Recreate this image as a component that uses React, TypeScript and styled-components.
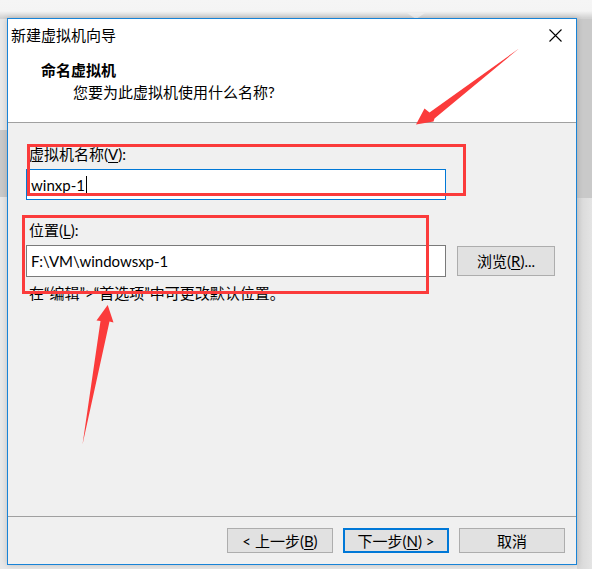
import React from "react";
import styled, { createGlobalStyle } from "styled-components";

const Global = createGlobalStyle`
  html, body { margin: 0; padding: 0; background: #e6e6e6; }
  * { box-sizing: border-box; }
`;

const FONT = `"Lato", "Noto Sans CJK SC", sans-serif`;

const Page = styled.div`
  position: relative;
  width: 592px;
  height: 569px;
  overflow: hidden;
  padding: 18px 15px 4px 7px;
  font-family: ${FONT};
  color: #000;
  background:
    linear-gradient(to bottom, #f5f5f5 0px, #f4f4f4 11px, #d2d2d2 18px, #d2d2d2 19px) top left / 100% 19px no-repeat,
    linear-gradient(#c9c9c9, #c9c9c9) right 0 top 18px / 15px 180px no-repeat,
    linear-gradient(#c9c9c9, #c9c9c9) left 0 top 130px / 7px 67px no-repeat,
    linear-gradient(to right, #d6d6d6, #e4e4e4) right 0 top 198px / 15px 371px no-repeat,
    #e8e8e8;
`;

const Notch = styled.div`
  position: absolute;
  left: 407px;
  top: 13px;
  width: 0;
  height: 0;
  border-left: 9px solid transparent;
  border-right: 9px solid transparent;
  border-top: 6px solid #f0f0f0;
`;

const Window = styled.div`
  position: relative;
  width: 570px;
  height: 547px;
  display: flex;
  flex-direction: column;
  border: 1px solid #1883d7;
  background: #f0f0f0;
  box-shadow: 0 0 6px rgba(0, 0, 0, 0.18);
`;

const TitleBar = styled.div`
  height: 32px;
  flex: none;
  display: flex;
  align-items: center;
  justify-content: space-between;
  padding-left: 3px;
  background: #fff;
`;

const TitleText = styled.span`
  font-size: 15px;
  line-height: 20px;
`;

const CloseBox = styled.div`
  width: 42px;
  height: 32px;
  display: flex;
  align-items: center;
  justify-content: center;
`;

const Header = styled.div`
  height: 72px;
  flex: none;
  background: #fff;
  border-bottom: 1px solid #a0a0a0;
  padding: 9px 0 0 33px;
`;

const Heading = styled.div`
  font-size: 15px;
  line-height: 20px;
  font-weight: 700;
`;

const SubHeading = styled.div`
  margin: 2px 0 0 32px;
  font-size: 15px;
  line-height: 20px;
`;

const Body = styled.div`
  flex: 1;
  padding: 21px 0 0 18px;
  display: flex;
  flex-direction: column;
  align-items: flex-start;
`;

const Label = styled.div<{ $gap: number }>`
  margin: ${(p) => p.$gap}px 0 0 3px;
  font-size: 15px;
  line-height: 20px;
`;

const U = styled.span`
  text-decoration: underline;
  text-underline-offset: 2px;
`;

const Row = styled.div`
  margin-top: 5px;
  display: flex;
  align-items: center;
  gap: 11px;
`;

const Field = styled.div<{ $focused?: boolean; $h: number }>`
  width: 420px;
  height: ${(p) => p.$h}px;
  margin-top: ${(p) => (p.$focused ? 5 : 0)}px;
  display: flex;
  align-items: center;
  padding-left: 4px;
  background: #fff;
  border: 1px solid ${(p) => (p.$focused ? "#0078d7" : "#7a7a7a")};
  font-size: 15px;
  line-height: 20px;
`;

const Caret = styled.span`
  display: inline-block;
  width: 1px;
  height: 18px;
  margin-left: 1px;
  background: #000;
`;

const Button = styled.div<{ $w: number; $h: number; $default?: boolean }>`
  width: ${(p) => p.$w}px;
  height: ${(p) => p.$h}px;
  display: flex;
  align-items: center;
  justify-content: center;
  background: #e1e1e1;
  border: ${(p) => (p.$default ? "2px solid #0078d7" : "1px solid #adadad")};
  font-size: 15px;
  line-height: 20px;
  white-space: pre;
`;

const Hint = styled.div`
  margin: 6px 0 0 3px;
  font-size: 15px;
  line-height: 20px;
`;

const Footer = styled.div`
  flex: none;
  border-top: 1px solid #a0a0a0;
  padding: 11px 11px 11px 0;
  display: flex;
  justify-content: flex-end;
  gap: 10px;
`;

const RedBox = styled.div<{ $x: number; $y: number; $w: number; $h: number }>`
  position: absolute;
  left: ${(p) => p.$x}px;
  top: ${(p) => p.$y}px;
  width: ${(p) => p.$w}px;
  height: ${(p) => p.$h}px;
  border: 3px solid #fb3b3b;
  pointer-events: none;
`;

const Overlay = styled.svg`
  position: absolute;
  left: 0;
  top: 0;
  pointer-events: none;
`;

export default function App() {
  return (
    <>
      <Global />
      <Page>
        <Notch />
        <Window>
          <TitleBar>
            <TitleText>新建虚拟机向导</TitleText>
            <CloseBox>
              <svg width="13" height="13" viewBox="0 0 13 13">
                <path d="M0.5 0.5 L12.5 12.5 M12.5 0.5 L0.5 12.5" stroke="#000" strokeWidth="1.1" fill="none" />
              </svg>
            </CloseBox>
          </TitleBar>
          <Header>
            <Heading>命名虚拟机</Heading>
            <SubHeading>您要为此虚拟机使用什么名称?</SubHeading>
          </Header>
          <Body>
            <Label $gap={0}>
              虚拟机名称(<U>V</U>):
            </Label>
            <Field $focused $h={31}>
              winxp-1
              <Caret />
            </Field>
            <Label $gap={20}>
              位置(<U>L</U>):
            </Label>
            <Row>
              <Field $h={32}>F:\VM\windowsxp-1</Field>
              <Button $w={98} $h={30}>
                浏览(<U>R</U>)...
              </Button>
            </Row>
            <Hint>在“编辑”&gt;“首选项”中可更改默认位置。</Hint>
          </Body>
          <Footer>
            <Button $w={106} $h={25}>
              {"< 上一步("}
              <U>B</U>)
            </Button>
            <Button $w={106} $h={25} $default>
              下一步(<U>N</U>){" >"}
            </Button>
            <Button $w={106} $h={25}>
              取消
            </Button>
          </Footer>
        </Window>
        <RedBox $x={27} $y={144} $w={439} $h={52} />
        <RedBox $x={22} $y={215} $w={407} $h={79} />
        <Overlay width="592" height="569" viewBox="0 0 592 569">
          <polygon
            points="416,124.5 424.5,108.5 429.5,112.5 519,48.5 434.5,118.5 433.5,121.5"
            fill="#fb3b3b"
          />
          <polygon
            points="107.7,305 113.5,322.5 109.5,321.5 82.5,444.5 100.5,321 96.5,320.5"
            fill="#fb3b3b"
          />
        </Overlay>
      </Page>
    </>
  );
}
